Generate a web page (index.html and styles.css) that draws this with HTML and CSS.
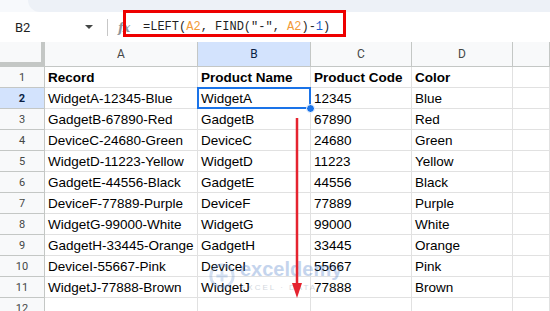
FILE: index.html
```html
<!DOCTYPE html>
<html>
<head>
<meta charset="utf-8">
<link rel="stylesheet" href="styles.css">
</head>
<body>
<div class="page">
  <div class="topstrip"><div class="topstrip-inner"></div></div>
  <div class="fbar">
    <div class="namebox">
      <span class="nb-text">B2</span>
      <span class="nb-caret"></span>
    </div>
    <div class="sep"></div>
    <div class="fx">fx</div>
    <div class="formula">=LEFT(<span class="ref">A2</span>, FIND("-", <span class="ref">A2</span>)-<span class="num">1</span>)</div>
    <div class="redbox"></div>
  </div>
  <div class="sheet">
    <div class="grid">
      <div class="corner"></div>
      <div class="ch">A</div>
      <div class="ch sel">B</div>
      <div class="ch">C</div>
      <div class="ch">D</div>
      <div class="ch"></div>

      <div class="rh">1</div>
      <div class="c b">Record</div><div class="c b">Product Name</div><div class="c b">Product Code</div><div class="c b">Color</div><div class="c"></div>

      <div class="rh sel">2</div>
      <div class="c">WidgetA-12345-Blue</div><div class="c active">WidgetA<span class="selbox"><span class="handle"></span></span></div><div class="c">12345</div><div class="c">Blue</div><div class="c"></div>

      <div class="rh">3</div>
      <div class="c">GadgetB-67890-Red</div><div class="c">GadgetB</div><div class="c">67890</div><div class="c">Red</div><div class="c"></div>

      <div class="rh">4</div>
      <div class="c">DeviceC-24680-Green</div><div class="c">DeviceC</div><div class="c">24680</div><div class="c">Green</div><div class="c"></div>

      <div class="rh">5</div>
      <div class="c">WidgetD-11223-Yellow</div><div class="c">WidgetD</div><div class="c">11223</div><div class="c">Yellow</div><div class="c"></div>

      <div class="rh">6</div>
      <div class="c">GadgetE-44556-Black</div><div class="c">GadgetE</div><div class="c">44556</div><div class="c">Black</div><div class="c"></div>

      <div class="rh">7</div>
      <div class="c">DeviceF-77889-Purple</div><div class="c">DeviceF</div><div class="c">77889</div><div class="c">Purple</div><div class="c"></div>

      <div class="rh">8</div>
      <div class="c">WidgetG-99000-White</div><div class="c">WidgetG</div><div class="c">99000</div><div class="c">White</div><div class="c"></div>

      <div class="rh">9</div>
      <div class="c">GadgetH-33445-Orange</div><div class="c">GadgetH</div><div class="c">33445</div><div class="c">Orange</div><div class="c"></div>

      <div class="rh">10</div>
      <div class="c">DeviceI-55667-Pink</div><div class="c">DeviceI</div><div class="c">55667</div><div class="c">Pink</div><div class="c"></div>

      <div class="rh">11</div>
      <div class="c">WidgetJ-77888-Brown</div><div class="c">WidgetJ</div><div class="c">77888</div><div class="c">Brown</div><div class="c"></div>

      <div class="rh">12</div>
      <div class="c"></div><div class="c"></div><div class="c"></div><div class="c"></div><div class="c"></div>
    </div>

    <div class="watermark">
      <svg class="wm-logo" width="28" height="28" viewBox="0 0 30 30">
        <circle cx="15" cy="15" r="12" fill="none" stroke="#6f9ad6" stroke-width="3"/>
        <path d="M9 15 h12 M15 9 v12" stroke="#6f9ad6" stroke-width="3"/>
      </svg>
      <div class="wm-text">
        <div class="wm-name">exceldemy</div>
        <div class="wm-sub">EXCEL · DATA · BI</div>
      </div>
    </div>

    <svg class="arrow" width="14" height="185" viewBox="0 0 14 185">
      <line x1="7" y1="0" x2="7" y2="168" stroke="#e5232f" stroke-width="2.5"/>
      <polygon points="2,165 12,165 7,180" fill="#e5232f"/>
    </svg>
  </div>
</div>
</body>
</html>
```

FILE: styles.css
```css
* { box-sizing: border-box; }
html, body { margin: 0; padding: 0; background: #ffffff; }
body { width: 550px; height: 311px; overflow: hidden; font-family: "Liberation Sans", Arial, sans-serif; }

.page { width: 550px; height: 311px; position: relative; }

.topstrip { height: 12px; background: #f7f9fc; }
.topstrip-inner { height: 12px; margin-left: 28px; background: #edf1f7; border-bottom-left-radius: 12px; }

.fbar { height: 30px; display: flex; align-items: center; position: relative; background: #fff; }
.namebox { width: 107px; display: flex; align-items: center; padding-left: 15px; padding-right: 14px; justify-content: space-between; }
.nb-text { font-family: "Roboto", "Liberation Sans", sans-serif; font-size: 13px; color: #1f1f1f; }
.nb-caret { width: 0; height: 0; border-left: 4px solid transparent; border-right: 4px solid transparent; border-top: 4px solid #444746; }
.sep { width: 1px; height: 17px; background: #c7c7c7; }
.fx { margin-left: 10px; width: 24px; font-family: "DejaVu Serif", "Liberation Serif", serif; font-style: italic; font-weight: bold; font-size: 13px; color: #8f959b; letter-spacing: -1px; }
.formula { font-family: "Liberation Mono", "DejaVu Sans Mono", monospace; font-size: 12px; color: #1f1f1f; padding-left: 1px; white-space: pre; }
.formula .ref { color: #f29b38; }
.formula .num { color: #1a5fd0; }
.redbox { position: absolute; left: 123px; top: -2px; width: 223px; height: 27px; border: 3px solid #ee0000; }

.sheet { position: relative; }
.grid {
  display: grid;
  grid-template-columns: 45px 153px 113px 101px 101px 37px;
  grid-template-rows: 25px;
  grid-auto-rows: 21px;
}
.corner { background: #f8f9fa; border-right: 4px solid #c4c7c5; border-bottom: 5px solid #c4c7c5; }
.ch {
  background: #f8f9fa; border-right: 1px solid #c4c7c5; border-bottom: 1px solid #c4c7c5;
  font-family: "Roboto", "Liberation Sans", sans-serif; font-size: 12px; color: #444746;
  display: flex; align-items: center; justify-content: center;
}
.ch.sel { background: #d3e3fd; color: #0b1f44; }
.rh {
  background: #f8f9fa; border-right: 1px solid #c4c7c5; border-bottom: 1px solid #c4c7c5;
  font-family: "Roboto", "Liberation Sans", sans-serif; font-size: 11px; color: #444746;
  display: flex; align-items: center; justify-content: center;
}
.rh.sel { background: #d3e3fd; color: #0b1f44; font-weight: bold; }
.c {
  border-right: 1px solid #e1e1e1; border-bottom: 1px solid #e1e1e1;
  font-size: 13.5px; color: #000; padding-left: 3px; line-height: 21px; white-space: nowrap; overflow: visible;
}
.c.b { font-weight: bold; }
.c.active { position: relative; }
.selbox { position: absolute; left: -1px; top: -1px; right: -1px; bottom: -1px; border: 2px solid #1a73e8; }
.handle { position: absolute; right: -6px; bottom: -6px; width: 9px; height: 9px; border-radius: 50%; background: #1a73e8; border: 1px solid #fff; }

.watermark { position: absolute; left: 208px; top: 217px; display: flex; align-items: center; gap: 4px; opacity: 0.3; }
.wm-name { font-family: "Liberation Sans", sans-serif; font-weight: bold; font-size: 20px; color: #3f74c4; line-height: 21px; }
.wm-sub { font-family: "Liberation Sans", sans-serif; font-size: 8px; letter-spacing: 2px; color: #6b7c93; margin-top: 3px; }

.arrow { position: absolute; left: 290px; top: 76px; }
```
